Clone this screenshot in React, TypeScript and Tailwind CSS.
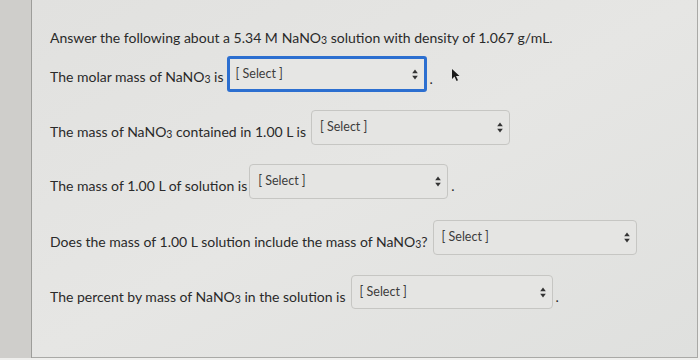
import type { ReactNode } from 'react';

function Arrows() {
    return (
        <svg width="6" height="11" viewBox="0 0 6 11" className="shrink-0">
            <path d="M3 0.5 L5.8 4.3 L0.2 4.3 Z" fill="#333" />
            <path d="M3 10.5 L5.8 6.7 L0.2 6.7 Z" fill="#333" />
        </svg>
    );
}

function Select({ w, focused }: { w: number; focused?: boolean }) {
    return (
        <div
            className={
                focused
                    ? 'h-full flex items-center justify-between pl-[6px] pr-[6px] border-[3px] border-[#2c6fd0] rounded-[3px] bg-[#e6e6e4]'
                    : 'h-full flex items-center justify-between pl-[8px] pr-[6px] border border-[#c6c6c3] rounded-[4px] bg-[#e5e5e3]'
            }
            style={{ width: w }}
        >
            <span className="text-[12.5px] text-[#3c3c3c]">[ Select ]</span>
            <Arrows />
        </div>
    );
}

function Na() {
    return (
        <>
            NaNO<sub className="text-[10.5px] relative top-[1px]">3</sub>
        </>
    );
}

function Row({ children, className }: { children: ReactNode; className: string }) {
    return <div className={'flex items-center ' + className}>{children}</div>;
}

export default function App() {
    return (
        <div className="w-[700px] h-[360px] bg-[#efefed] overflow-hidden" style={{ fontFamily: 'Lato, "Open Sans", sans-serif' }}>
            <div className="flex h-[358px]">
                <div className="w-[32px] bg-[#cfcecb] border-r border-[#9d9d9a]" />
                <div className="w-[666px] border-r border-b border-[#a9a9a6] bg-gradient-to-br from-[#e1e1df] via-[#e6e6e4] to-[#dfe0de] pl-[18px] pt-[27px] text-[14px] text-[#2a2a2a]">
                    <div className="h-[20px] flex items-center">
                        Answer the following about a 5.34 M <span className="ml-[4px]"><Na /></span>&nbsp;solution with density of 1.067 g/mL.
                    </div>

                    <Row className="mt-[9px] h-[36px]">
                        <span className="pt-[4px] mr-[3px]">The molar mass of <Na /> is</span>
                        <Select w={200} focused />
                        <span className="pt-[8px] ml-[3px]">.</span>
                        <svg width="10" height="14" viewBox="0 0 10 14" className="ml-[18px] mt-[2px]">
                            <path d="M1 1 L1 11 L3.5 8.5 L5.5 13 L7 12.3 L5 8 L8.5 8 Z" fill="#1a1a1a" />
                        </svg>
                    </Row>

                    <Row className="mt-[18px] h-[35px]">
                        <span className="pt-[8px] mr-[5px]">The mass of <Na /> contained in 1.00 L is</span>
                        <Select w={199} />
                    </Row>

                    <Row className="mt-[19px] h-[35px]">
                        <span className="pt-[8px] mr-[2px]">The mass of 1.00 L of solution is</span>
                        <Select w={199} />
                        <span className="pt-[8px] ml-[3px]">.</span>
                    </Row>

                    <Row className="mt-[21px] h-[35px]">
                        <span className="pt-[8px] mr-[5px]">Does the mass of 1.00 L solution include the mass of <Na />?</span>
                        <Select w={204} />
                    </Row>

                    <Row className="mt-[20px] h-[34px]">
                        <span className="pt-[8px] mr-[5px]">The percent by mass of <Na /> in the solution is</span>
                        <Select w={202} />
                        <span className="pt-[8px] ml-[3px]">.</span>
                    </Row>
                </div>
            </div>
        </div>
    );
}
